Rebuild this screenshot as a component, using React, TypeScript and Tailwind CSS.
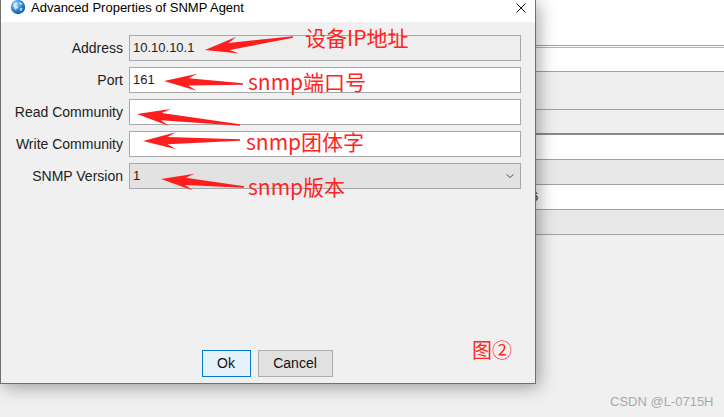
import React from "react";

function arrowPts(tx: number, ty: number, px: number, py: number, head = 33, barb = 8.5, neck = 3.6, tail = 0.7) {
  const dx = px - tx;
  const dy = py - ty;
  const L = Math.hypot(dx, dy);
  const ux = dx / L;
  const uy = dy / L;
  const nx = -uy;
  const ny = ux;
  const kx = px - ux * head * 0.74;
  const ky = py - uy * head * 0.74;
  const bx = px - ux * head;
  const by = py - uy * head;
  const pts = [
    [tx + nx * tail, ty + ny * tail],
    [kx + nx * neck, ky + ny * neck],
    [bx + nx * barb, by + ny * barb],
    [px, py],
    [bx - nx * barb, by - ny * barb],
    [kx - nx * neck, ky - ny * neck],
    [tx - nx * tail, ty - ny * tail],
  ];
  return pts.map((p) => `${p[0].toFixed(1)},${p[1].toFixed(1)}`).join(" ");
}

const arrows: [number, number, number, number][] = [
  [293, 37, 205, 50],
  [243, 84, 164, 81],
  [240, 125, 137, 114],
  [240, 140, 143, 141],
  [244, 187, 161, 179],
];

function Row({ label, children }: { label: string; children: React.ReactNode }) {
  return (
    <div className="flex h-[26px] items-center">
      <div className="w-[122px] shrink-0 text-right text-[14px] text-[#222]">{label}</div>
      <div className="ml-[6px] h-full w-[392px]">{children}</div>
    </div>
  );
}

export default function App() {
  return (
    <div className="relative h-[417px] w-[724px] overflow-hidden bg-[#f0f0f0] font-['Liberation_Sans',Arial,sans-serif]">
      {/* background window rows */}
      <div className="flex flex-col">
        <div className="h-[45px] bg-white" />
        <div className="h-px bg-[#a0a0a0]" />
        <div className="h-px bg-white" />
        <div className="h-px bg-[#b4b4b4]" />
        <div className="h-[23px] bg-white" />
        <div className="h-px bg-[#a0a0a0]" />
        <div className="h-[37px] bg-[#efefef]" />
        <div className="h-px bg-[#a0a0a0]" />
        <div className="h-[23px] bg-[#efefef]" />
        <div className="h-[2px] bg-[#8a8a8a]" />
        <div className="h-[24px] bg-white" />
        <div className="h-px bg-[#a0a0a0]" />
        <div className="h-[24px] bg-[#e8e8e8]" />
        <div className="h-px bg-[#a0a0a0]" />
        <div className="flex h-[24px] items-center bg-white pl-[531px] text-[13px] text-[#333]">6</div>
        <div className="h-px bg-[#a0a0a0]" />
        <div className="h-[24px] bg-[#e8e8e8]" />
        <div className="h-px bg-[#a0a0a0]" />
      </div>

      {/* dialog window */}
      <div className="absolute left-0 top-0 flex h-[384px] w-[536px] flex-col border-x border-b border-[#707070] bg-[#f0f0f0] shadow-[3px_3px_16px_rgba(0,0,0,0.35)]">
        <div className="relative h-[22px] shrink-0 bg-white">
          <svg className="absolute left-[9px] top-[-1px]" width="16" height="16" viewBox="0 0 16 16">
            <defs>
              <radialGradient id="gl" cx="0.35" cy="0.3" r="0.8">
                <stop offset="0" stopColor="#9fd8ff" />
                <stop offset="0.55" stopColor="#2a86d8" />
                <stop offset="1" stopColor="#0b4f9a" />
              </radialGradient>
            </defs>
            <circle cx="8" cy="8" r="7.2" fill="url(#gl)" />
            <path d="M3.5 5.2c1.2-1 2.6-1.6 3.6-1.2.6.3.2 1.1-.5 1.4-.8.4-.4 1.3.4 1.5.9.2 1.2 1 .7 1.8-.4.7-1.3.8-1.6 1.6-.2.6-.9.5-1.2 0-.4-.8-.3-1.8-1-2.4-.5-.5-.9-1.1-.4-2.7z" fill="#e8f4ff" opacity="0.85" />
            <path d="M9.5 3.2c1.3.2 2.5 1 3.2 2.1-.6.2-1.300-.1-1.8.3-.4.4-1.1.2-1.2-.4-.1-.7-.6-1.2-.2-2z" fill="#e8f4ff" opacity="0.8" />
            <path d="M10.2 9.2c.8-.4 1.8-.2 2.4.3-.3 1.2-1.1 2.3-2.1 2.9-.4-.9-.9-2.4-.3-3.2z" fill="#e8f4ff" opacity="0.8" />
          </svg>
          <div className="absolute left-[30px] top-0 whitespace-nowrap text-[13px] leading-[15px] text-black">
            Advanced Properties of SNMP Agent
          </div>
          <svg className="absolute left-[515px] top-[3px]" width="10" height="10" viewBox="0 0 10 10">
            <path d="M0.5 0.5L9.5 9.5M9.5 0.5L0.5 9.5" stroke="#111" strokeWidth="1" />
          </svg>
        </div>

        <div className="flex flex-1 flex-col pt-[13px]">
          <div className="flex flex-col gap-[6px]">
            <Row label="Address">
              <div className="flex h-full items-center border border-[#a8a8a8] bg-[#eeeeee] pl-[3px] text-[13px] text-[#222]">10.10.10.1</div>
            </Row>
            <Row label="Port">
              <div className="flex h-full items-center border border-[#a8a8a8] bg-white pl-[3px] text-[13px] text-[#222]">161</div>
            </Row>
            <Row label="Read Community">
              <div className="h-full border border-[#a8a8a8] bg-white" />
            </Row>
            <Row label="Write Community">
              <div className="h-full border border-[#a8a8a8] bg-white" />
            </Row>
            <Row label="SNMP Version">
              <div className="flex h-full items-center justify-between border border-[#a8a8a8] bg-[#e2e2e2] pl-[3px] pr-[6px] text-[13px] text-[#222]">
                <span>1</span>
                <svg width="8" height="6" viewBox="0 0 8 6">
                  <path d="M0.5 1.5L4 4.5L7.5 1.5" stroke="#555" strokeWidth="1" fill="none" />
                </svg>
              </div>
            </Row>
          </div>

          <div className="mt-auto flex justify-center gap-[7px] pb-[6px] pr-[2px]">
            <button className="h-[27px] w-[49px] border border-[#0078d7] bg-[#e5f1fb] text-[14px] text-[#111]">Ok</button>
            <button className="h-[27px] w-[75px] border border-[#adadad] bg-[#e1e1e1] text-[14px] text-[#111]">Cancel</button>
          </div>
        </div>
      </div>

      {/* red annotations */}
      <svg className="pointer-events-none absolute left-0 top-0" width="724" height="417">
        {arrows.map((a, i) => (
          <polygon key={i} points={arrowPts(a[0], a[1], a[2], a[3])} fill="#fe1e1e" />
        ))}
      </svg>
      <div className="pointer-events-none absolute inset-0 font-['Noto_Sans_CJK_SC',sans-serif] text-[21px] leading-[21px] text-[#fe2424]">
        <span className="absolute left-[305px] top-[27px] whitespace-nowrap">设备IP地址</span>
        <span className="absolute left-[248px] top-[71px] whitespace-nowrap">snmp端口号</span>
        <span className="absolute left-[246px] top-[131px] whitespace-nowrap">snmp团体字</span>
        <span className="absolute left-[248px] top-[176px] whitespace-nowrap">snmp版本</span>
        <span className="absolute left-[472px] top-[340px] whitespace-nowrap text-[20px] leading-[20px]">图②</span>
      </div>

      <div className="absolute left-[610px] top-[394px] whitespace-nowrap text-[13px] leading-[15px] text-[#a8a8a8]">CSDN @L-0715H</div>
    </div>
  );
}
